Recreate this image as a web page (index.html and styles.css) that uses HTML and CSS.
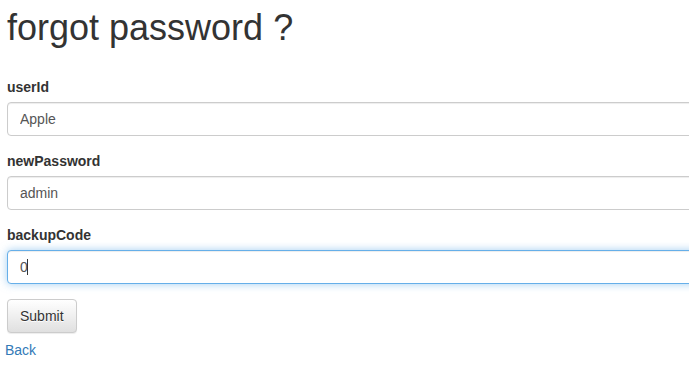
FILE: index.html
```html
<!DOCTYPE html>
<html lang="en">
<head>
    <meta charset="UTF-8">
    <meta name="viewport" content="width=device-width, initial-scale=1.0">
    <title>Forgot password</title>
    <link rel="stylesheet" href="styles.css">
</head>
<body>
    <div class="page">
        <h1 class="title">forgot password ?</h1>
        <form class="reset-form" onsubmit="return false;">
            <div class="form-group">
                <label for="userId">userId</label>
                <input type="text" id="userId" class="form-control" value="Apple">
            </div>
            <div class="form-group">
                <label for="newPassword">newPassword</label>
                <input type="text" id="newPassword" class="form-control" value="admin">
            </div>
            <div class="form-group">
                <label for="backupCode">backupCode</label>
                <div class="input-wrap">
                    <input type="text" id="backupCode" class="form-control focused" value="0">
                    <span class="caret-mark"></span>
                </div>
            </div>
            <button type="submit" class="btn">Submit</button>
        </form>
        <a href="#" class="back-link">Back</a>
    </div>
</body>
</html>
```

FILE: styles.css
```css
html, body {
    overflow-x: hidden;
}
body {
    font-family: "Liberation Sans", Arial, Helvetica, sans-serif;
    font-size: 14px;
    line-height: 20px;
    color: #333;
    background-color: #fff;
    margin: 0;
}
.page {
    padding: 8px 0 0 7px;
}
.title {
    font-size: 36px;
    font-weight: 500;
    line-height: 40px;
    margin: 0 0 29px 0;
}
.form-group {
    margin-bottom: 15px;
}
.form-group label {
    display: block;
    font-weight: bold;
    margin-bottom: 5px;
}
.input-wrap {
    position: relative;
}
.form-control {
    display: block;
    box-sizing: border-box;
    width: 720px;
    height: 34px;
    padding: 6px 12px;
    font-family: inherit;
    font-size: 14px;
    line-height: 20px;
    color: #555;
    background-color: #fff;
    border: 1px solid #ccc;
    border-radius: 4px;
    box-shadow: inset 0 1px 1px rgba(0, 0, 0, 0.075);
    outline: none;
}
.form-control.focused {
    border-color: #66afe9;
    box-shadow: inset 0 1px 1px rgba(0, 0, 0, 0.075), 0 0 8px rgba(102, 175, 233, 0.6);
}
.caret-mark {
    position: absolute;
    left: 20px;
    top: 9px;
    width: 1px;
    height: 16px;
    background-color: #333;
}
.btn {
    display: block;
    padding: 6px 12px;
    font-family: inherit;
    font-size: 14px;
    line-height: 20px;
    color: #333;
    text-shadow: 0 1px 0 #fff;
    background-image: linear-gradient(to bottom, #fff 0, #e0e0e0 100%);
    border: 1px solid #ccc;
    border-radius: 4px;
    box-shadow: inset 0 1px 0 rgba(255, 255, 255, 0.15), 0 1px 1px rgba(0, 0, 0, 0.075);
    cursor: pointer;
}
.back-link {
    display: inline-block;
    margin: 7px 0 0 -2px;
    color: #337ab7;
    text-decoration: none;
}
```
